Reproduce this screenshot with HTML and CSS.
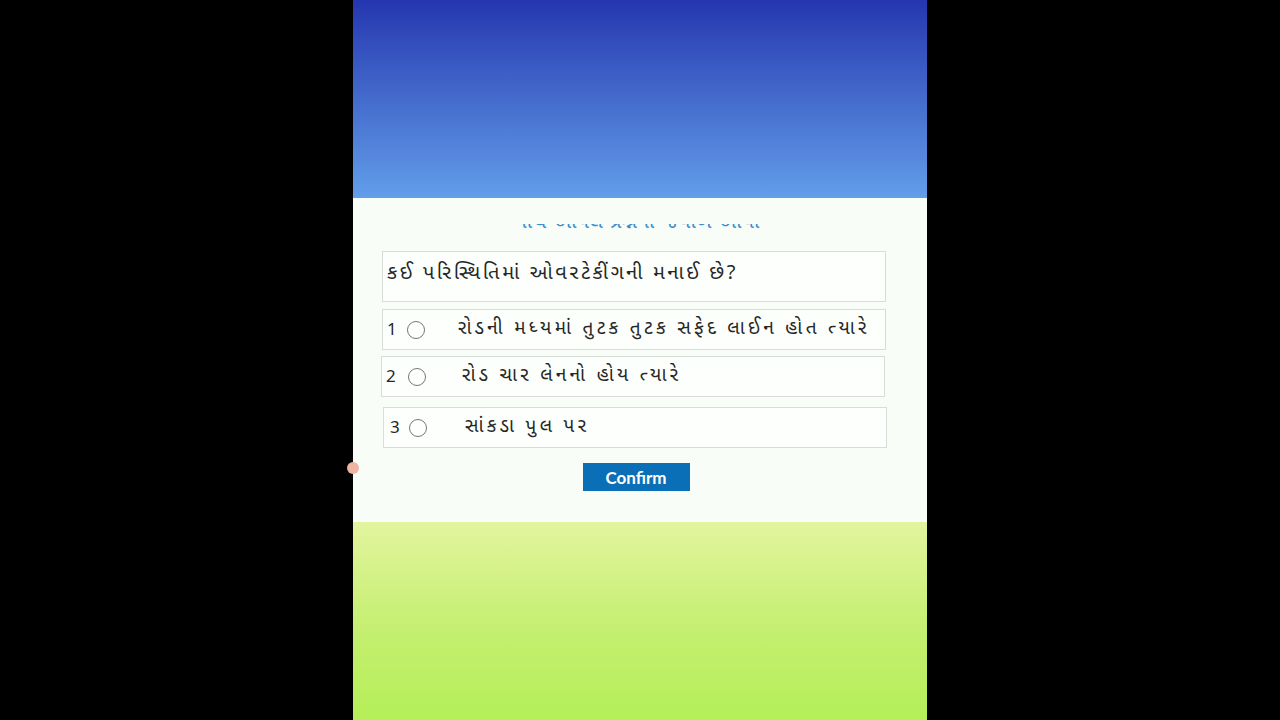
FILE: index.html
```html
<!DOCTYPE html>
<html lang="gu">
<head>
    <meta charset="UTF-8">
    <meta name="viewport" content="width=device-width, initial-scale=1.0">
    <title>પ્રશ્ન</title>
    <link rel="stylesheet" href="styles.css">
</head>
<body>
    <div class="phone">
        <div class="top-band"></div>

        <!-- પ્રશ્ન -->
        <div class="panel">
            <span class="dot"></span>
            <div class="title-clip">
                <div class="title">નીચે આપેલ પ્રશ્નનો જવાબ આપો</div>
            </div>

            <div class="question">કઈ પરિસ્થિતિમાં ઓવરટેકીંગની મનાઈ છે?</div>

            <label class="option opt-1">
                <span class="num">1</span>
                <input type="radio" name="ans">
                <span class="opt-text">રોડની મધ્યમાં તુટક તુટક સફેદ લાઈન હોત ત્યારે</span>
            </label>
            <label class="option opt-2">
                <span class="num">2</span>
                <input type="radio" name="ans">
                <span class="opt-text">રોડ ચાર લેનનો હોય ત્યારે</span>
            </label>
            <label class="option opt-3">
                <span class="num">3</span>
                <input type="radio" name="ans">
                <span class="opt-text">સાંકડા પુલ પર</span>
            </label>

            <div class="actions">
                <button class="confirm">Confirm</button>
            </div>
        </div>

        <div class="bottom-band"></div>
    </div>
</body>
</html>
```

FILE: styles.css
```css
html, body {
    margin: 0;
    height: 100%;
}
body {
    display: flex;
    justify-content: center;
    background-color: #000;
    font-family: "Noto Sans", "Noto Sans Gujarati", "Lohit Gujarati", sans-serif;
    color: #262626;
}
.phone {
    width: 574px;
    height: 720px;
    display: flex;
    flex-direction: column;
}
.top-band {
    height: 198px;
    background: linear-gradient(to bottom, #2536b0, #3b5cc4 35%, #629ee9);
}
.bottom-band {
    flex: 1;
    background: linear-gradient(to bottom, #e3f49e, #c4ef70 55%, #b5ef58);
}

/* panel central */
.panel {
    position: relative;
    height: 324px;
    background-color: #f8fdf7;
    padding: 26px 41px 0 29px;
    box-sizing: border-box;
}
.dot {
    position: absolute;
    left: -6px;
    top: 264px;
    width: 12px;
    height: 12px;
    border-radius: 50%;
    background-color: #efb4a2;
}
.title-clip {
    height: 6px;
    overflow: hidden;
    display: flex;
    flex-direction: column;
    justify-content: flex-end;
    align-items: center;
    margin-left: 8px;
}
.title {
    font-size: 20px;
    line-height: 20px;
    letter-spacing: 1px;
    color: #3d8ccc;
    white-space: nowrap;
    flex-shrink: 0;
    margin-bottom: -1px;
}
.question {
    margin-top: 21px;
    height: 51px;
    box-sizing: border-box;
    border: 1px solid #d9ddd9;
    background-color: #fcfffb;
    padding: 5px 4px 0;
    font-size: 20px;
    line-height: 30px;
    letter-spacing: 2.6px;
}
.option {
    display: flex;
    align-items: flex-start;
    height: 41px;
    box-sizing: border-box;
    border: 1px solid #d9ddd9;
    background-color: #fcfffb;
    padding: 3px 4px 0;
    font-size: 19px;
    line-height: 28px;
}
.opt-1 { margin-top: 7px; }
.opt-2 { margin-top: 6px; margin-left: -1px; margin-right: 1px; }
.opt-3 { margin-top: 10px; margin-left: 1px; margin-right: -1px; }
.num {
    width: 16px;
    font-size: 17px;
    padding-top: 2px;
}
.opt-2 .num { width: 18px; }
.opt-3 .num { margin-left: 2px; width: 15px; }
.option input {
    width: 18px;
    height: 18px;
    margin: 8px 0 0 4px;
    accent-color: #444;
}
.opt-text {
    margin-left: 33px;
    letter-spacing: 3.3px;
}
.opt-2 .opt-text { margin-left: 36px; }
.opt-3 .opt-text { margin-left: 38px; }

.actions {
    display: flex;
    justify-content: center;
    margin-top: 15px;
    padding-left: 4px;
}
.confirm {
    width: 107px;
    height: 28px;
    border: none;
    background-color: #0b6fb8;
    color: #fff;
    font-family: Lato, "Open Sans", sans-serif;
    font-weight: bold;
    font-size: 17px;
    padding: 0;
}
```
